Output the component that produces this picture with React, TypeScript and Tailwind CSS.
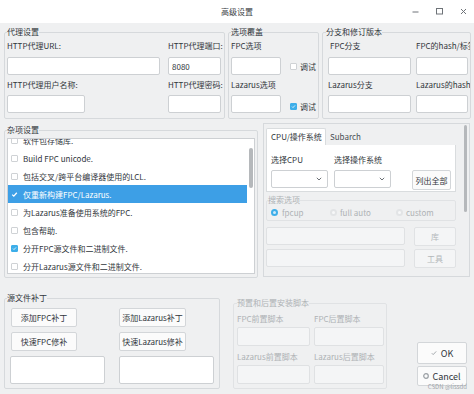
import React from "react";

const FONT = "font-['Noto_Sans_CJK_SC','Noto_Sans',sans-serif]";

function Group({
  title,
  className = "",
  disabled = false,
  children,
}: {
  title: string;
  className?: string;
  disabled?: boolean;
  children?: React.ReactNode;
}) {
  return (
    <fieldset className={`border border-[#d6d9dc] rounded-[2px] ${className}`}>
      <legend className={`leading-[10px] ${disabled ? "text-[#aeb2b5]" : ""}`}>{title}</legend>
      {children}
    </fieldset>
  );
}

function Field({ className = "", value = "", disabled = false }: { className?: string; value?: string; disabled?: boolean }) {
  return (
    <input
      readOnly
      defaultValue={value}
      className={`block h-[18px] px-[3px] rounded-[2px] border outline-none text-[8px] ${
        disabled ? "bg-[#f4f5f6] border-[#dfe1e3]" : "bg-white border-[#cdd0d3] text-[#31363b]"
      } ${className}`}
    />
  );
}

function Box({ checked = false, className = "" }: { checked?: boolean; className?: string }) {
  return (
    <span
      className={`inline-flex shrink-0 items-center justify-center w-[7px] h-[7px] rounded-[1px] border ${
        checked ? "bg-[#3daee9] border-[#3daee9]" : "bg-white border-[#cfd2d5]"
      } ${className}`}
    >
      {checked && (
        <svg width="7" height="7" viewBox="0 0 7 7">
          <path d="M1.4 3.6 L2.8 5 L5.6 2" fill="none" stroke="white" strokeWidth="1.1" />
        </svg>
      )}
    </span>
  );
}

function Radio({ on = false }: { on?: boolean }) {
  return (
    <span
      className={`inline-block shrink-0 w-[7px] h-[7px] rounded-full border-[2px] ${
        on ? "border-[#3daee9] bg-[#cfe9f8]" : "border-[#e2e4e6] bg-[#f7f8f9]"
      }`}
    />
  );
}

function Combo({ className = "" }: { className?: string }) {
  return (
    <div className={`h-[18px] w-[57px] bg-white border border-[#cdd0d3] rounded-[2px] flex items-center justify-end pr-[5px] ${className}`}>
      <svg width="6" height="4" viewBox="0 0 6 4">
        <path d="M0.8 0.8 L3 3 L5.2 0.8" fill="none" stroke="#6b7075" strokeWidth="1" />
      </svg>
    </div>
  );
}

const listItems = [
  { label: "软件包存储库.", checked: false },
  { label: "Build FPC unicode.", checked: false },
  { label: "包括交叉/跨平台编译器使用的LCL.", checked: false },
  { label: "仅重新构建FPC/Lazarus.", checked: true, selected: true },
  { label: "为Lazarus准备使用系统的FPC.", checked: false },
  { label: "包含帮助.", checked: false },
  { label: "分开FPC源文件和二进制文件.", checked: true },
  { label: "分开Lazarus源文件和二进制文件.", checked: false },
];

export default function App() {
  return (
    <div className={`relative w-[474px] h-[394px] overflow-hidden bg-[#eff0f1] text-[#31363b] text-[8px] leading-[11px] whitespace-nowrap ${FONT}`}>
      {/* Title bar */}
      <div className="h-[23px] bg-white grid grid-cols-[1fr_auto_1fr] items-center">
        <div />
        <div className="text-[#3b4045]">高级设置</div>
        <div className="flex justify-end items-center gap-[17px] pr-[7px]">
          <svg width="7" height="7" viewBox="0 0 7 7">
            <path d="M0.5 4 H6.5" stroke="#6e7378" strokeWidth="1" />
          </svg>
          <svg width="7" height="7" viewBox="0 0 7 7">
            <rect x="0.5" y="0.5" width="6" height="5.5" fill="none" stroke="#6e7378" strokeWidth="1" />
          </svg>
          <svg width="7" height="7" viewBox="0 0 7 7">
            <path d="M1 1 L6 6 M6 1 L1 6" stroke="#6e7378" strokeWidth="1" />
          </svg>
        </div>
      </div>

      {/* Top row */}
      <div className="flex mt-[4px] pl-[4px] gap-[3px]">
        <Group title="代理设置" className="w-[221px] h-[92px] px-[2px]">
          <div className="grid grid-cols-[153px_53px] gap-x-[8px]">
            <div className="h-[18px] leading-[18px]">HTTP代理URL:</div>
            <div className="h-[18px] leading-[18px]">HTTP代理端口:</div>
            <Field className="mt-[2px] w-full" />
            <Field className="mt-[2px] w-full" value="8080" />
            <div className="mt-[1px] h-[18px] leading-[18px]">HTTP代理用户名称:</div>
            <div className="mt-[1px] h-[18px] leading-[18px]">HTTP代理密码:</div>
            <Field className="mt-[1px] w-[78px]" />
            <Field className="mt-[1px] w-full" />
          </div>
        </Group>

        <Group title="选项覆盖" className="w-[90px] h-[92px] px-[2px]">
          <div className="h-[18px] leading-[18px]">FPC选项</div>
          <div className="mt-[2px] flex items-center">
            <Field className="w-[50px]" />
            <Box className="ml-[9px]" />
            <span className="ml-[3px]">调试</span>
          </div>
          <div className="mt-[1px] h-[18px] leading-[18px]">Lazarus选项</div>
          <div className="mt-[1px] flex items-center">
            <Field className="w-[50px]" />
            <Box checked className="ml-[9px] mt-[4px]" />
            <span className="ml-[3px] mt-[4px]">调试</span>
          </div>
        </Group>

        <Group title="分支和修订版本" className="w-[149px] h-[92px] pl-[3px] pr-[1px]">
          <div className="grid grid-cols-[83px_52px] gap-x-[5px] pl-[2px]">
            <div className="h-[18px] leading-[18px] pl-[2px]">FPC分支</div>
            <div className="h-[18px] leading-[18px] w-[54px] overflow-hidden">FPC的hash/标签</div>
            <Field className="mt-[2px] w-full" />
            <Field className="mt-[2px] w-full" />
            <div className="mt-[1px] h-[18px] leading-[18px]">Lazarus分支</div>
            <div className="mt-[1px] h-[18px] leading-[18px] w-[54px] overflow-hidden">Lazarus的hash/标签</div>
            <Field className="mt-[1px] w-full" />
            <Field className="mt-[1px] w-full" />
          </div>
        </Group>
      </div>

      {/* Middle row */}
      <div className="flex mt-[4px] pl-[4px] gap-[5px] items-start">
        <Group title="杂项设置" className="w-[254px] h-[153px] px-[2px] mt-[2px]">
          <div className="mt-[3px] h-[136px] bg-white border border-[#cdd0d3] flex overflow-hidden">
            <div className="flex-1 overflow-hidden">
              <div className="-mt-[8px]">
                {listItems.map((it) => (
                  <div
                    key={it.label}
                    className={`h-[18px] flex items-center pl-[3px] ${it.selected ? "bg-[#3d9fe6] text-white" : ""}`}
                  >
                    {it.selected ? (
                      <span className="w-[7px] h-[7px] inline-flex items-center justify-center">
                        <svg width="7" height="7" viewBox="0 0 7 7">
                          <path d="M1.2 3.6 L2.8 5.1 L5.8 1.8" fill="none" stroke="white" strokeWidth="1.3" />
                        </svg>
                      </span>
                    ) : (
                      <Box checked={it.checked} />
                    )}
                    <span className="ml-[5px]">{it.label}</span>
                  </div>
                ))}
              </div>
            </div>
            <div className="w-[7px] bg-white">
              <div className="mt-[9px] ml-[2px] w-[4px] h-[40px] rounded-full bg-[#b5b8bb]" />
            </div>
          </div>
        </Group>

        <div className="w-[207px] h-[154px] border border-[#d6d9dc] flex overflow-hidden">
          <div className="flex-1 pl-[2px] pt-[4px] overflow-hidden">
            {/* Tabs */}
            <div className="flex h-[17px] items-end">
              <div className="h-[17px] w-[60px] bg-white border border-b-0 border-[#d9dcde] rounded-t-[2px] pl-[4px] leading-[16px]">
                CPU/操作系统
              </div>
              <div className="pl-[4px] leading-[16px] text-[#4a4f54]">Subarch</div>
            </div>
            <div className="w-[190px] h-[47px] bg-white border border-t-0 border-[#d9dcde] flex items-start pl-[4px] pt-[9px]">
              <div className="w-[57px]">
                <div className="h-[11px]">选择CPU</div>
                <Combo className="mt-[5px]" />
              </div>
              <div className="w-[57px] ml-[6px]">
                <div className="h-[11px]">选择操作系统</div>
                <Combo className="mt-[5px]" />
              </div>
              <button className="ml-[21px] mt-[16px] h-[20px] w-[39px] bg-[#fbfbfb] border border-[#d3d6d9] rounded-[2px] text-[8px]">
                列出全部
              </button>
            </div>

            <Group title="搜索选项" disabled className="mt-[3px] w-[190px] h-[26px] px-[1px] border-[#e0e2e4]">
              <div className="h-[14px] flex items-center pl-[3px] text-[#aeb2b5]">
                <div className="w-[59px] flex items-center">
                  <Radio on />
                  <span className="ml-[4px]">fpcup</span>
                </div>
                <div className="w-[66px] flex items-center">
                  <Radio />
                  <span className="ml-[3px]">full auto</span>
                </div>
                <div className="flex items-center">
                  <Radio />
                  <span className="ml-[3px]">custom</span>
                </div>
              </div>
            </Group>

            <div className="mt-[6px] flex items-start">
              <Field disabled className="w-[139px]" />
              <button className="ml-[9px] w-[42px] h-[19px] bg-[#f4f5f6] border border-[#e0e2e4] rounded-[2px] text-[#b3b7ba] text-[8px]">
                库
              </button>
            </div>
            <div className="mt-[3px] flex items-start">
              <Field disabled className="w-[139px]" />
              <button className="ml-[9px] w-[42px] h-[19px] bg-[#f4f5f6] border border-[#e0e2e4] rounded-[2px] text-[#b3b7ba] text-[8px]">
                工具
              </button>
            </div>
          </div>
          <div className="w-[7px]">
            <div className="mt-[1px] ml-[2px] w-[3px] h-[87px] rounded-full bg-[#b5b8bb]" />
          </div>
        </div>
      </div>

      {/* Bottom row */}
      <div className="flex mt-[15px] pl-[4px] items-start">
        <Group title="源文件补丁" className="w-[216px] h-[96px] px-[2px]">
          <div className="pl-[3px] pt-[5px] grid grid-cols-[95px_95px] gap-x-[14px]">
            <button className="ml-[1px] w-[66px] h-[19px] bg-[#fbfbfb] border border-[#d3d6d9] rounded-[2px] text-[8px]">添加FPC补丁</button>
            <button className="w-[67px] h-[19px] bg-[#fbfbfb] border border-[#d3d6d9] rounded-[2px] text-[8px]">添加Lazarus补丁</button>
            <button className="mt-[5px] ml-[1px] w-[66px] h-[19px] bg-[#fbfbfb] border border-[#d3d6d9] rounded-[2px] text-[8px]">快速FPC修补</button>
            <button className="mt-[5px] w-[67px] h-[19px] bg-[#fbfbfb] border border-[#d3d6d9] rounded-[2px] text-[8px]">快速Lazarus修补</button>
            <div className="mt-[5px] h-[28px] bg-white border border-[#cdd0d3] rounded-[2px]" />
            <div className="mt-[5px] h-[28px] bg-white border border-[#cdd0d3] rounded-[2px]" />
          </div>
        </Group>

        <Group title="预置和后置安装脚本" disabled className="ml-[13px] mt-[5px] w-[154px] h-[91px] pl-[3px] pr-[2px] border-[#e0e2e4]">
          <div className="grid grid-cols-[73px_70px] gap-x-[4px] text-[#aeb2b5]">
            <div className="mt-[5px] h-[11px]">FPC前置脚本</div>
            <div className="mt-[5px] h-[11px]">FPC后置脚本</div>
            <Field disabled className="mt-[3px] w-full h-[19px]" />
            <Field disabled className="mt-[3px] w-full h-[19px]" />
            <div className="mt-[5px] h-[11px]">Lazarus前置脚本</div>
            <div className="mt-[5px] h-[11px]">Lazarus后置脚本</div>
            <Field disabled className="mt-[3px] w-full h-[19px]" />
            <Field disabled className="mt-[3px] w-full h-[19px]" />
          </div>
        </Group>

        <div className="ml-[30px] mt-[49px] w-[50px] flex flex-col gap-[2px]">
          <button className="h-[22px] bg-[#fbfbfb] border border-[#d3d6d9] rounded-[2px] flex items-center justify-center text-[9px]">
            <svg width="6" height="6" viewBox="0 0 6 6" className="mr-[4px]">
              <path d="M0.8 3.2 L2.2 4.6 L5.2 1.4" fill="none" stroke="#9a9fa4" strokeWidth="0.9" />
            </svg>
            OK
          </button>
          <button className="h-[20px] bg-[#fbfbfb] border border-[#d3d6d9] rounded-[2px] flex items-center justify-center text-[9px]">
            <svg width="6" height="6" viewBox="0 0 6 6" className="mr-[3px]">
              <circle cx="3" cy="3" r="2.3" fill="none" stroke="#9a9fa4" strokeWidth="1.2" />
            </svg>
            Cancel
          </button>
        </div>
      </div>

      {/* watermark */}
      <div className="absolute right-[7px] bottom-[4px] text-[6px] leading-[6px] text-[#9ea3a8]">CSDN @lissdd</div>
    </div>
  );
}
